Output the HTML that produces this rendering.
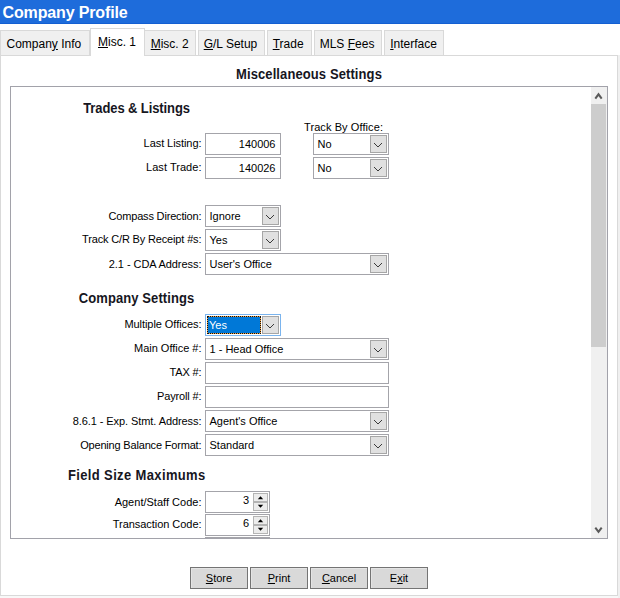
<!DOCTYPE html>
<html><head><meta charset="utf-8"><style>
html,body{margin:0;padding:0;}
body{width:620px;height:598px;position:relative;overflow:hidden;background:#fff;font-family:"Liberation Sans", sans-serif;}
.t{position:absolute;white-space:nowrap;}
.b{position:absolute;}
u{text-decoration:underline;text-underline-offset:1px;}
</style></head><body>
<div class="b" style="left:0px;top:0px;width:620px;height:23px;background:#1e6cdb;"></div>
<div class="b" style="left:0px;top:23px;width:620px;height:1px;background:#135fd2;"></div>
<div class="t" style="left:2.5px;top:4.46px;font-size:16px;line-height:18px;font-weight:bold;color:#fff;letter-spacing:-0.143px;">Company Profile</div>
<div class="b" style="left:0px;top:55px;width:618px;height:541px;background:#fff;border:1px solid #d9d9d9;box-sizing:border-box;"></div>
<div class="b" style="left:618px;top:55px;width:2px;height:543px;background:#f0f0f0;"></div>
<div class="b" style="left:0px;top:596px;width:618px;height:2px;background:#f8f8f8;"></div>
<div class="b" style="left:0px;top:30px;width:90px;height:26px;background:#f0f0f0;border:1px solid #d9d9d9;box-sizing:border-box;"></div>
<div class="t" style="left:6.5px;top:36.84px;font-size:12px;line-height:14px;font-weight:normal;color:#000;">Compan<u>y</u> Info</div>
<div class="b" style="left:144px;top:30px;width:52px;height:26px;background:#f0f0f0;border:1px solid #d9d9d9;box-sizing:border-box;"></div>
<div class="t" style="left:150.7px;top:36.84px;font-size:12px;line-height:14px;font-weight:normal;color:#000;"><u>M</u>isc. 2</div>
<div class="b" style="left:198px;top:30px;width:67px;height:26px;background:#f0f0f0;border:1px solid #d9d9d9;box-sizing:border-box;"></div>
<div class="t" style="left:203.7px;top:36.84px;font-size:12px;line-height:14px;font-weight:normal;color:#000;"><u>G</u>/L Setup</div>
<div class="b" style="left:267px;top:30px;width:45px;height:26px;background:#f0f0f0;border:1px solid #d9d9d9;box-sizing:border-box;"></div>
<div class="t" style="left:272.7px;top:36.84px;font-size:12px;line-height:14px;font-weight:normal;color:#000;"><u>T</u>rade</div>
<div class="b" style="left:314px;top:30px;width:68px;height:26px;background:#f0f0f0;border:1px solid #d9d9d9;box-sizing:border-box;"></div>
<div class="t" style="left:319.7px;top:36.84px;font-size:12px;line-height:14px;font-weight:normal;color:#000;">MLS <u>F</u>ees</div>
<div class="b" style="left:384px;top:30px;width:60px;height:26px;background:#f0f0f0;border:1px solid #d9d9d9;box-sizing:border-box;"></div>
<div class="t" style="left:390.2px;top:36.84px;font-size:12px;line-height:14px;font-weight:normal;color:#000;"><u>I</u>nterface</div>
<div class="b" style="left:90px;top:28px;width:55px;height:28px;background:#fff;border:1px solid #d9d9d9;border-bottom:none;box-sizing:border-box;"></div>
<div class="t" style="left:98px;top:34.84px;font-size:12px;line-height:14px;font-weight:normal;color:#000;"><u>M</u>isc. 1</div>
<div class="t" style="left:236px;top:67.00px;font-size:13px;line-height:15px;font-weight:bold;color:#16161e;letter-spacing:0.100px;transform:scaleY(1.08);transform-origin:0 12px;">Miscellaneous Settings</div>
<div class="b" style="left:10px;top:86px;width:598px;height:453px;background:#fff;border:1px solid #a2a2aa;box-sizing:border-box;"></div>
<div class="b" style="left:591px;top:87px;width:16px;height:451px;background:#f0f0f0;"></div>
<div class="b" style="left:591px;top:104px;width:15px;height:243px;background:#cdcdcd;"></div>
<svg class="b" style="left:591px;top:87px" width="16" height="451" viewBox="0 0 16 451"><polyline points="4.3,11.6 7.5,7.3 10.7,11.6" fill="none" stroke="#5a5a5a" stroke-width="2"/><polyline points="4.3,440.6 7.5,444.9 10.7,440.6" fill="none" stroke="#5a5a5a" stroke-width="2"/></svg>
<div class="t" style="left:83.25px;top:101.00px;font-size:13px;line-height:15px;font-weight:bold;color:#16161e;letter-spacing:-0.103px;transform:scaleY(1.08);transform-origin:0 12px;">Trades &amp; Listings</div>
<div class="t" style="left:78.8px;top:291.00px;font-size:13px;line-height:15px;font-weight:bold;color:#16161e;letter-spacing:0.087px;transform:scaleY(1.08);transform-origin:0 12px;">Company Settings</div>
<div class="t" style="left:68px;top:468.00px;font-size:13px;line-height:15px;font-weight:bold;color:#16161e;letter-spacing:0.361px;transform:scaleY(1.08);transform-origin:0 12px;">Field Size Maximums</div>
<div class="t" style="left:304px;top:120.69px;font-size:11px;line-height:13px;font-weight:normal;color:#000;letter-spacing:0.090px;">Track By Office:</div>
<div class="t" style="right:418.5px;top:136.69px;font-size:11px;line-height:13px;font-weight:normal;color:#000;text-align:right;letter-spacing:-0.067px;margin-right:0.067px;">Last Listing:</div>
<div class="b" style="left:205px;top:133px;width:76px;height:22px;background:#fff;border:1px solid #a4a4aa;box-sizing:border-box;"></div>
<div class="t" style="right:344.5px;top:137.69px;font-size:11px;line-height:13px;font-weight:normal;color:#000;text-align:right;">140006</div>
<div class="b" style="left:313px;top:133px;width:76px;height:22px;background:#fff;border:1px solid #a4a4aa;box-sizing:border-box;"></div>
<div class="t" style="left:317.5px;top:137.69px;font-size:11px;line-height:13px;font-weight:normal;color:#000;">No</div>
<div class="b" style="left:370px;top:135px;width:17px;height:18px;background:#e0e0e0;border:1px solid #a6a6a6;box-sizing:border-box;"></div>
<svg class="b" style="left:370px;top:135px" width="17" height="18" viewBox="0 0 17 18" shape-rendering="crispEdges" fill="#3a3a3a"><rect x="4" y="8" width="1" height="1"/><rect x="5" y="9" width="1" height="1"/><rect x="6" y="10" width="1" height="1"/><rect x="7" y="11" width="1" height="1"/><rect x="8" y="11" width="1" height="1"/><rect x="9" y="10" width="1" height="1"/><rect x="10" y="9" width="1" height="1"/><rect x="11" y="8" width="1" height="1"/></svg>
<div class="t" style="right:418.5px;top:160.69px;font-size:11px;line-height:13px;font-weight:normal;color:#000;text-align:right;letter-spacing:0.040px;margin-right:-0.040px;">Last Trade:</div>
<div class="b" style="left:205px;top:157px;width:76px;height:22px;background:#fff;border:1px solid #a4a4aa;box-sizing:border-box;"></div>
<div class="t" style="right:344.5px;top:161.69px;font-size:11px;line-height:13px;font-weight:normal;color:#000;text-align:right;">140026</div>
<div class="b" style="left:313px;top:157px;width:76px;height:22px;background:#fff;border:1px solid #a4a4aa;box-sizing:border-box;"></div>
<div class="t" style="left:317.5px;top:161.69px;font-size:11px;line-height:13px;font-weight:normal;color:#000;">No</div>
<div class="b" style="left:370px;top:159px;width:17px;height:18px;background:#e0e0e0;border:1px solid #a6a6a6;box-sizing:border-box;"></div>
<svg class="b" style="left:370px;top:159px" width="17" height="18" viewBox="0 0 17 18" shape-rendering="crispEdges" fill="#3a3a3a"><rect x="4" y="8" width="1" height="1"/><rect x="5" y="9" width="1" height="1"/><rect x="6" y="10" width="1" height="1"/><rect x="7" y="11" width="1" height="1"/><rect x="8" y="11" width="1" height="1"/><rect x="9" y="10" width="1" height="1"/><rect x="10" y="9" width="1" height="1"/><rect x="11" y="8" width="1" height="1"/></svg>
<div class="t" style="right:418.5px;top:209.69px;font-size:11px;line-height:13px;font-weight:normal;color:#000;text-align:right;letter-spacing:-0.176px;margin-right:0.176px;">Compass Direction:</div>
<div class="b" style="left:205px;top:205px;width:76px;height:22px;background:#fff;border:1px solid #a4a4aa;box-sizing:border-box;"></div>
<div class="t" style="left:209.5px;top:209.69px;font-size:11px;line-height:13px;font-weight:normal;color:#000;">Ignore</div>
<div class="b" style="left:262px;top:207px;width:17px;height:18px;background:#e0e0e0;border:1px solid #a6a6a6;box-sizing:border-box;"></div>
<svg class="b" style="left:262px;top:207px" width="17" height="18" viewBox="0 0 17 18" shape-rendering="crispEdges" fill="#3a3a3a"><rect x="4" y="8" width="1" height="1"/><rect x="5" y="9" width="1" height="1"/><rect x="6" y="10" width="1" height="1"/><rect x="7" y="11" width="1" height="1"/><rect x="8" y="11" width="1" height="1"/><rect x="9" y="10" width="1" height="1"/><rect x="10" y="9" width="1" height="1"/><rect x="11" y="8" width="1" height="1"/></svg>
<div class="t" style="right:418.5px;top:232.69px;font-size:11px;line-height:13px;font-weight:normal;color:#000;text-align:right;letter-spacing:-0.157px;margin-right:0.157px;">Track C/R By Receipt #s:</div>
<div class="b" style="left:205px;top:229px;width:76px;height:22px;background:#fff;border:1px solid #a4a4aa;box-sizing:border-box;"></div>
<div class="t" style="left:209.5px;top:233.69px;font-size:11px;line-height:13px;font-weight:normal;color:#000;">Yes</div>
<div class="b" style="left:262px;top:231px;width:17px;height:18px;background:#e0e0e0;border:1px solid #a6a6a6;box-sizing:border-box;"></div>
<svg class="b" style="left:262px;top:231px" width="17" height="18" viewBox="0 0 17 18" shape-rendering="crispEdges" fill="#3a3a3a"><rect x="4" y="8" width="1" height="1"/><rect x="5" y="9" width="1" height="1"/><rect x="6" y="10" width="1" height="1"/><rect x="7" y="11" width="1" height="1"/><rect x="8" y="11" width="1" height="1"/><rect x="9" y="10" width="1" height="1"/><rect x="10" y="9" width="1" height="1"/><rect x="11" y="8" width="1" height="1"/></svg>
<div class="t" style="right:418.5px;top:257.69px;font-size:11px;line-height:13px;font-weight:normal;color:#000;text-align:right;letter-spacing:-0.047px;margin-right:0.047px;">2.1 - CDA Address:</div>
<div class="b" style="left:205px;top:253px;width:184px;height:22px;background:#fff;border:1px solid #a4a4aa;box-sizing:border-box;"></div>
<div class="t" style="left:209.5px;top:257.69px;font-size:11px;line-height:13px;font-weight:normal;color:#000;">User's Office</div>
<div class="b" style="left:370px;top:255px;width:17px;height:18px;background:#e0e0e0;border:1px solid #a6a6a6;box-sizing:border-box;"></div>
<svg class="b" style="left:370px;top:255px" width="17" height="18" viewBox="0 0 17 18" shape-rendering="crispEdges" fill="#3a3a3a"><rect x="4" y="8" width="1" height="1"/><rect x="5" y="9" width="1" height="1"/><rect x="6" y="10" width="1" height="1"/><rect x="7" y="11" width="1" height="1"/><rect x="8" y="11" width="1" height="1"/><rect x="9" y="10" width="1" height="1"/><rect x="10" y="9" width="1" height="1"/><rect x="11" y="8" width="1" height="1"/></svg>
<div class="t" style="right:418.5px;top:317.69px;font-size:11px;line-height:13px;font-weight:normal;color:#000;text-align:right;letter-spacing:-0.062px;margin-right:0.062px;">Multiple Offices:</div>
<div class="b" style="left:205px;top:314px;width:76px;height:22px;background:#fff;border:1px solid #7ab4ee;box-sizing:border-box;"></div>
<div class="b" style="left:207px;top:316px;width:54px;height:18px;background:#f0a040;border:1px dotted #111;box-sizing:border-box;"></div>
<div class="b" style="left:208px;top:317px;width:52px;height:16px;background:#0078d7;"></div>
<div class="t" style="left:209px;top:318.69px;font-size:11px;line-height:13px;font-weight:normal;color:#fff;">Yes</div>
<div class="b" style="left:262px;top:316px;width:17px;height:18px;background:#e0e0e0;border:1px solid #a6a6a6;box-sizing:border-box;"></div>
<svg class="b" style="left:262px;top:316px" width="17" height="18" viewBox="0 0 17 18" shape-rendering="crispEdges" fill="#3a3a3a"><rect x="4" y="8" width="1" height="1"/><rect x="5" y="9" width="1" height="1"/><rect x="6" y="10" width="1" height="1"/><rect x="7" y="11" width="1" height="1"/><rect x="8" y="11" width="1" height="1"/><rect x="9" y="10" width="1" height="1"/><rect x="10" y="9" width="1" height="1"/><rect x="11" y="8" width="1" height="1"/></svg>
<div class="t" style="right:418.5px;top:341.69px;font-size:11px;line-height:13px;font-weight:normal;color:#000;text-align:right;letter-spacing:-0.015px;margin-right:0.015px;">Main Office #:</div>
<div class="b" style="left:205px;top:338px;width:184px;height:22px;background:#fff;border:1px solid #a4a4aa;box-sizing:border-box;"></div>
<div class="t" style="left:209.5px;top:342.69px;font-size:11px;line-height:13px;font-weight:normal;color:#000;">1 - Head Office</div>
<div class="b" style="left:370px;top:340px;width:17px;height:18px;background:#e0e0e0;border:1px solid #a6a6a6;box-sizing:border-box;"></div>
<svg class="b" style="left:370px;top:340px" width="17" height="18" viewBox="0 0 17 18" shape-rendering="crispEdges" fill="#3a3a3a"><rect x="4" y="8" width="1" height="1"/><rect x="5" y="9" width="1" height="1"/><rect x="6" y="10" width="1" height="1"/><rect x="7" y="11" width="1" height="1"/><rect x="8" y="11" width="1" height="1"/><rect x="9" y="10" width="1" height="1"/><rect x="10" y="9" width="1" height="1"/><rect x="11" y="8" width="1" height="1"/></svg>
<div class="t" style="right:418.5px;top:365.69px;font-size:11px;line-height:13px;font-weight:normal;color:#000;text-align:right;letter-spacing:-0.160px;margin-right:0.160px;">TAX #:</div>
<div class="b" style="left:205px;top:362px;width:184px;height:22px;background:#fff;border:1px solid #a4a4aa;box-sizing:border-box;"></div>
<div class="t" style="right:418.5px;top:389.69px;font-size:11px;line-height:13px;font-weight:normal;color:#000;text-align:right;letter-spacing:-0.156px;margin-right:0.156px;">Payroll #:</div>
<div class="b" style="left:205px;top:386px;width:184px;height:22px;background:#fff;border:1px solid #a4a4aa;box-sizing:border-box;"></div>
<div class="t" style="right:418.5px;top:414.69px;font-size:11px;line-height:13px;font-weight:normal;color:#000;text-align:right;letter-spacing:-0.077px;margin-right:0.077px;">8.6.1 - Exp. Stmt. Address:</div>
<div class="b" style="left:205px;top:410px;width:184px;height:22px;background:#fff;border:1px solid #a4a4aa;box-sizing:border-box;"></div>
<div class="t" style="left:209.5px;top:414.69px;font-size:11px;line-height:13px;font-weight:normal;color:#000;">Agent's Office</div>
<div class="b" style="left:370px;top:412px;width:17px;height:18px;background:#e0e0e0;border:1px solid #a6a6a6;box-sizing:border-box;"></div>
<svg class="b" style="left:370px;top:412px" width="17" height="18" viewBox="0 0 17 18" shape-rendering="crispEdges" fill="#3a3a3a"><rect x="4" y="8" width="1" height="1"/><rect x="5" y="9" width="1" height="1"/><rect x="6" y="10" width="1" height="1"/><rect x="7" y="11" width="1" height="1"/><rect x="8" y="11" width="1" height="1"/><rect x="9" y="10" width="1" height="1"/><rect x="10" y="9" width="1" height="1"/><rect x="11" y="8" width="1" height="1"/></svg>
<div class="t" style="right:418.5px;top:438.69px;font-size:11px;line-height:13px;font-weight:normal;color:#000;text-align:right;letter-spacing:-0.182px;margin-right:0.182px;">Opening Balance Format:</div>
<div class="b" style="left:205px;top:434px;width:184px;height:22px;background:#fff;border:1px solid #a4a4aa;box-sizing:border-box;"></div>
<div class="t" style="left:209.5px;top:438.69px;font-size:11px;line-height:13px;font-weight:normal;color:#000;">Standard</div>
<div class="b" style="left:370px;top:436px;width:17px;height:18px;background:#e0e0e0;border:1px solid #a6a6a6;box-sizing:border-box;"></div>
<svg class="b" style="left:370px;top:436px" width="17" height="18" viewBox="0 0 17 18" shape-rendering="crispEdges" fill="#3a3a3a"><rect x="4" y="8" width="1" height="1"/><rect x="5" y="9" width="1" height="1"/><rect x="6" y="10" width="1" height="1"/><rect x="7" y="11" width="1" height="1"/><rect x="8" y="11" width="1" height="1"/><rect x="9" y="10" width="1" height="1"/><rect x="10" y="9" width="1" height="1"/><rect x="11" y="8" width="1" height="1"/></svg>
<div class="t" style="right:418.5px;top:495.69px;font-size:11px;line-height:13px;font-weight:normal;color:#000;text-align:right;letter-spacing:0.013px;margin-right:-0.013px;">Agent/Staff Code:</div>
<div class="b" style="left:205px;top:491px;width:65px;height:22px;background:#fff;border:1px solid #a4a4aa;box-sizing:border-box;"></div>
<div class="t" style="right:371px;top:493.69px;font-size:11px;line-height:13px;font-weight:normal;color:#000;text-align:right;">3</div>
<div class="b" style="left:253px;top:493px;width:15px;height:9px;background:#ececec;border:1px solid #b4b4b4;box-sizing:border-box;"></div>
<div class="b" style="left:253px;top:502px;width:15px;height:9px;background:#ececec;border:1px solid #b4b4b4;box-sizing:border-box;"></div>
<svg class="b" style="left:253px;top:493px" width="15" height="18" viewBox="0 0 15 18"><polygon points="4.8,6.3 7.5,3.3 10.2,6.3" fill="#000"/><polygon points="4.8,11.8 10.2,11.8 7.5,14.8" fill="#000"/></svg>
<div class="t" style="right:418.5px;top:517.69px;font-size:11px;line-height:13px;font-weight:normal;color:#000;text-align:right;letter-spacing:-0.050px;margin-right:0.050px;">Transaction Code:</div>
<div class="b" style="left:205px;top:514px;width:65px;height:22px;background:#fff;border:1px solid #a4a4aa;box-sizing:border-box;"></div>
<div class="t" style="right:371px;top:516.69px;font-size:11px;line-height:13px;font-weight:normal;color:#000;text-align:right;">6</div>
<div class="b" style="left:253px;top:516px;width:15px;height:9px;background:#ececec;border:1px solid #b4b4b4;box-sizing:border-box;"></div>
<div class="b" style="left:253px;top:525px;width:15px;height:9px;background:#ececec;border:1px solid #b4b4b4;box-sizing:border-box;"></div>
<svg class="b" style="left:253px;top:516px" width="15" height="18" viewBox="0 0 15 18"><polygon points="4.8,6.3 7.5,3.3 10.2,6.3" fill="#000"/><polygon points="4.8,11.8 10.2,11.8 7.5,14.8" fill="#000"/></svg>
<div class="b" style="left:205px;top:537px;width:65px;height:1px;background:#a4a4aa;"></div>
<div class="b" style="left:190px;top:567px;width:58px;height:22px;background:#d9d9d9;border:1px solid #747474;box-sizing:border-box;box-shadow:inset 1px 1px 0 #e4e4e4;"></div>
<div class="t" style="left:190.0px;width:58px;top:571.69px;font-size:11px;line-height:13px;font-weight:normal;color:#000;text-align:center;"><u>S</u>tore</div>
<div class="b" style="left:250px;top:567px;width:58px;height:22px;background:#d9d9d9;border:1px solid #747474;box-sizing:border-box;box-shadow:inset 1px 1px 0 #e4e4e4;"></div>
<div class="t" style="left:250.0px;width:58px;top:571.69px;font-size:11px;line-height:13px;font-weight:normal;color:#000;text-align:center;"><u>P</u>rint</div>
<div class="b" style="left:310px;top:567px;width:58px;height:22px;background:#d9d9d9;border:1px solid #747474;box-sizing:border-box;box-shadow:inset 1px 1px 0 #e4e4e4;"></div>
<div class="t" style="left:310.0px;width:58px;top:571.69px;font-size:11px;line-height:13px;font-weight:normal;color:#000;text-align:center;"><u>C</u>ancel</div>
<div class="b" style="left:370px;top:567px;width:58px;height:22px;background:#d9d9d9;border:1px solid #747474;box-sizing:border-box;box-shadow:inset 1px 1px 0 #e4e4e4;"></div>
<div class="t" style="left:370.0px;width:58px;top:571.69px;font-size:11px;line-height:13px;font-weight:normal;color:#000;text-align:center;">E<u>x</u>it</div>
</body></html>
